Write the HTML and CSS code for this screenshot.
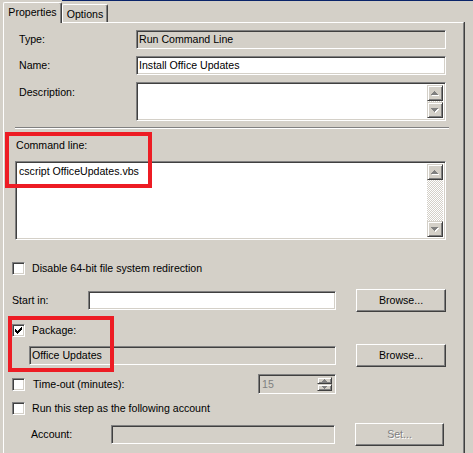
FILE: index.html
```html
<!DOCTYPE html>
<html>
<head>
<meta charset="utf-8">
<link rel="stylesheet" href="styles.css">
</head>
<body>
<div class="tabstrip">
  <div class="tab tab-active">Properties</div>
  <div class="tab tab-inactive">Options</div>
</div>
<div class="panel">
  <div class="row r-type">
    <span class="lbl lbl-top">Type:</span>
    <div class="field ro f-wide">Run Command Line</div>
  </div>
  <div class="row r-name">
    <span class="lbl lbl-top">Name:</span>
    <div class="field f-wide">Install Office Updates</div>
  </div>
  <div class="row r-desc">
    <span class="lbl lbl-top lbl-desc">Description:</span>
    <div class="field area f-wide f-desc">
      <div class="area-text"></div>
      <div class="vscroll">
        <div class="sbtn"><svg width="8" height="5" viewBox="0 0 8 5"><path d="M4 1h1v1h1v1h1v1h1v1H1V4h1V3h1V2h1z" fill="#fff"/><path d="M3 0h1v1h1v1h1v1h1v1H0V3h1V2h1V1h1z" fill="#808080"/></svg></div>
        <div class="track"></div>
        <div class="sbtn"><svg width="8" height="5" viewBox="0 0 8 5"><path d="M1 1h7v1H7v1H6v1H5v1H4V4H3V3H2V2H1z" fill="#fff"/><path d="M0 0h7v1H6v1H5v1H4v1H3V3H2V2H1V1H0z" fill="#808080"/></svg></div>
      </div>
    </div>
  </div>
  <div class="sep"></div>
  <div class="row r-cmdlbl"><span class="lbl">Command line:</span></div>
  <div class="row r-cmd">
    <div class="field area f-cmd">
      <div class="area-text">cscript OfficeUpdates.vbs</div>
      <div class="vscroll">
        <div class="sbtn"><svg width="8" height="5" viewBox="0 0 8 5"><path d="M4 1h1v1h1v1h1v1h1v1H1V4h1V3h1V2h1z" fill="#fff"/><path d="M3 0h1v1h1v1h1v1h1v1H0V3h1V2h1V1h1z" fill="#808080"/></svg></div>
        <div class="track"></div>
        <div class="sbtn"><svg width="8" height="5" viewBox="0 0 8 5"><path d="M1 1h7v1H7v1H6v1H5v1H4V4H3V3H2V2H1z" fill="#fff"/><path d="M0 0h7v1H6v1H5v1H4v1H3V3H2V2H1V1H0z" fill="#808080"/></svg></div>
      </div>
    </div>
  </div>
  <div class="row r-disable">
    <span class="cb"></span><span class="cb-text">Disable 64-bit file system redirection</span>
  </div>
  <div class="row r-start">
    <span class="lbl lbl-start">Start in:</span>
    <div class="field f-start"></div>
    <div class="btn">Browse...</div>
  </div>
  <div class="row r-pkgcb">
    <span class="cb"><svg width="7" height="7" viewBox="0 0 7 7" shape-rendering="crispEdges"><path d="M0 2h1v3H0zM1 3h1v3H1zM2 4h1v3H2zM3 3h1v3H3zM4 2h1v3H4zM5 1h1v3H5zM6 0h1v3H6z" fill="#000"/></svg></span><span class="cb-text">Package:</span>
  </div>
  <div class="row r-pkg">
    <div class="field ro f-pkg">Office Updates</div>
    <div class="btn">Browse...</div>
  </div>
  <div class="row r-timeout">
    <div class="cb-group">
      <span class="cb"></span><span class="cb-text cb-text-t">Time-out (minutes):</span>
    </div>
    <div class="field ro spinner">
      <span class="spin-val">15</span>
      <div class="spin-btns">
        <div class="spin-btn"><svg width="5" height="3" viewBox="0 0 5 3"><path d="M2 0h1v1h1v1h1v1H0V2h1V1h1z" fill="#808080"/></svg></div>
        <div class="spin-btn"><svg width="5" height="3" viewBox="0 0 5 3"><path d="M0 0h5v1H4v1H3v1H2V2H1V1H0z" fill="#808080"/></svg></div>
      </div>
    </div>
  </div>
  <div class="row r-run">
    <span class="cb"></span><span class="cb-text">Run this step as the following account</span>
  </div>
  <div class="row r-account">
    <span class="lbl lbl-account">Account:</span>
    <div class="field ro f-account"></div>
    <div class="btn btn-set btn-disabled">Set...</div>
  </div>
</div>
<div class="mark mark-cmd"></div>
<div class="mark mark-pkg"></div>
</body>
</html>
```
FILE: styles.css
```css
* { box-sizing: border-box; }

body {
  margin: 0;
  width: 473px;
  height: 453px;
  overflow: hidden;
  background: #d4d0c8;
  font-family: "Liberation Sans", Arial, sans-serif;
  font-size: 10.6px;
  line-height: 13px;
  color: #000;
}

.tabstrip {
  height: 22px;
  display: flex;
  align-items: flex-end;
  padding-left: 3px;
  background: linear-gradient(#0a246a, #0a246a) 62px 0 / 100% 1px no-repeat;
}

.tab {
  display: flex;
  align-items: center;
  justify-content: center;
  background: #d4d0c8;
  border-top: 1px solid #fff;
  border-left: 1px solid #fff;
  border-right: 1px solid #404040;
  box-shadow: inset -1px 0 #808080;
  border-radius: 2px 2px 0 0;
}

.tab-active {
  width: 59px;
  height: 21px;
  margin-bottom: -1px;
  padding-bottom: 1px;
  position: relative;
  z-index: 1;
}

.tab-inactive {
  width: 46px;
  height: 18px;
  padding-top: 1px;
}

.panel {
  margin-left: 3px;
  width: 461px;
  height: 431px;
  border-top: 1px solid #fff;
  border-left: 1px solid #fff;
  border-right: 1px solid #808080;
  box-shadow: 1px 0 0 #404040;
  display: flex;
  flex-direction: column;
}

.row { display: flex; align-items: center; flex: none; }

.lbl { flex: none; }
.lbl-top { width: 117px; }
.lbl-desc { align-self: flex-start; padding-top: 4px; }

.field {
  flex: none;
  display: flex;
  align-items: center;
  height: 19px;
  padding-left: 2px;
  background: #fff;
  border: 1px solid;
  border-color: #808080 #fff #fff #808080;
  box-shadow: inset 1px 1px #404040, inset -1px -1px #d4d0c8;
  white-space: nowrap;
  overflow: hidden;
}
.field.ro { background: #d4d0c8; }

.f-wide { width: 310px; }

.r-type { margin-top: 7px; height: 19px; padding-left: 15px; }
.r-name { margin-top: 7px; height: 19px; padding-left: 15px; }
.r-desc { margin-top: 7px; height: 39px; padding-left: 15px; align-items: flex-start; }
.f-desc { height: 39px; }

.area {
  align-items: stretch;
  padding: 2px;
}
.area-text {
  flex: 1;
  padding: 0 0 0 1px;
}
.vscroll {
  flex: none;
  width: 16px;
  display: flex;
  flex-direction: column;
}
.sbtn {
  flex: none;
  height: 16px;
  display: flex;
  align-items: center;
  justify-content: center;
  background: #d4d0c8;
  border: 1px solid;
  border-color: #d4d0c8 #404040 #404040 #d4d0c8;
  box-shadow: inset 1px 1px #fff, inset -1px -1px #808080;
}
.track {
  flex: 1;
  background: repeating-conic-gradient(#fff 0 25%, #d4d0c8 0 50%) 0 0 / 2px 2px;
}

.sep {
  flex: none;
  margin-top: 6px;
  margin-left: 11px;
  width: 434px;
  height: 2px;
  border-top: 1px solid #808080;
  border-bottom: 1px solid #fff;
}

.r-cmdlbl { margin-top: 10px; height: 13px; padding-left: 12px; }
.r-cmd { margin-top: 9px; height: 79px; padding-left: 11px; align-items: stretch; }
.f-cmd { width: 431px; height: 79px; }
.f-cmd .area-text { padding-top: 1px; }

.cb {
  flex: none;
  width: 13px;
  height: 13px;
  background: #fff;
  border: 1px solid;
  border-color: #808080 #fff #fff #808080;
  box-shadow: inset 1px 1px #404040, inset -1px -1px #d4d0c8;
  display: flex;
  align-items: center;
  justify-content: center;
}
.cb svg { display: block; }
.cb-text { margin-left: 7px; white-space: nowrap; }
.cb-text-t { margin-left: 8px; }

.r-disable { margin-top: 22px; height: 13px; padding-left: 8px; }

.r-start { margin-top: 14px; height: 23px; padding-left: 8px; }
.lbl-start { width: 76px; }
.f-start { width: 248px; }

.btn {
  flex: none;
  margin-left: 20px;
  width: 90px;
  height: 23px;
  display: flex;
  align-items: center;
  justify-content: center;
  background: #d4d0c8;
  border: 1px solid;
  border-color: #fff #404040 #404040 #fff;
  box-shadow: inset -1px -1px #808080;
}
.btn-set { width: 89px; }
.btn-disabled { color: #808080; text-shadow: 1px 1px #fff; }

.r-pkgcb { margin-top: 12px; height: 13px; padding-left: 8px; }
.r-pkg { margin-top: 7px; height: 23px; padding-left: 25px; }
.f-pkg { width: 307px; }

.r-timeout { margin-top: 7px; height: 20px; padding-left: 8px; }
.cb-group { flex: none; width: 246px; display: flex; align-items: center; }
.spinner {
  width: 78px;
  height: 20px;
  padding: 2px 2px 2px 3px;
  align-items: stretch;
}
.spin-val { flex: 1; display: flex; align-items: center; color: #808080; }
.spin-btns { flex: none; width: 15px; display: flex; flex-direction: column; margin-right: 1px; }
.spin-btn {
  flex: 1;
  display: flex;
  align-items: center;
  justify-content: center;
  background: #d4d0c8;
  border: 1px solid;
  border-color: #d4d0c8 #404040 #404040 #d4d0c8;
  box-shadow: inset 1px 1px #fff, inset -1px -1px #808080;
}
.spin-btn svg { display: block; }

.r-run { margin-top: 8px; height: 13px; padding-left: 8px; }

.r-account { margin-top: 8px; height: 23px; padding-left: 27px; }
.lbl-account { width: 80px; }
.f-account { width: 224px; }

.mark {
  position: absolute;
  border: 4px solid #ed1c24;
}
.mark-cmd { left: 5px; top: 132px; width: 147px; height: 56px; }
.mark-pkg { left: 8px; top: 316px; width: 106px; height: 56px; }
```
